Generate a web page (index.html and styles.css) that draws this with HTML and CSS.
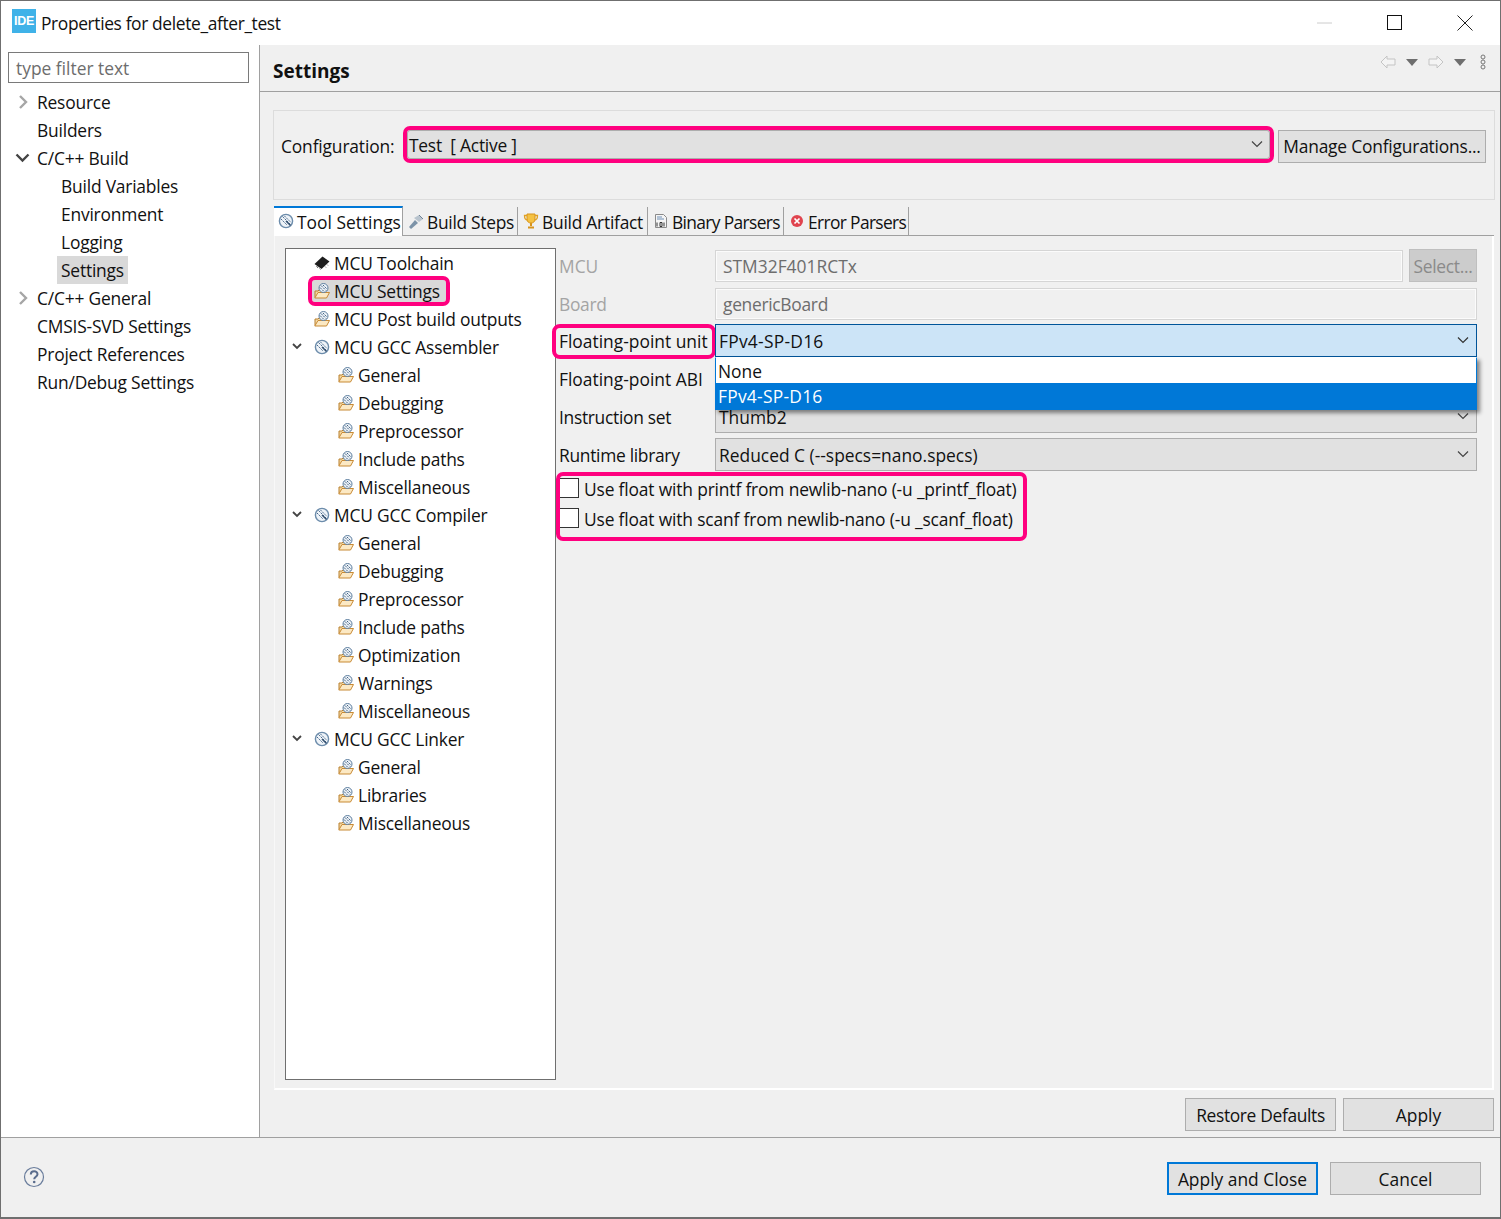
FILE: index.html
```html
<!DOCTYPE html>
<html lang="en">
<head>
<meta charset="utf-8">
<title>Properties for delete_after_test</title>
<link rel="stylesheet" href="styles.css">
</head>
<body>
<svg class="defs" width="0" height="0" aria-hidden="true">
  <symbol id="gear" viewBox="0 0 16 16">
    <circle cx="8" cy="8" r="6.6" fill="#eef3f8" stroke="#6c8cab" stroke-width="1.4"/>
    <path d="M4.500 3.500l8 8M6.500 3l6.500 6.500M3 6l6 6" stroke="#4a6a8c" stroke-width="1" fill="none" stroke-dasharray="2 1"/>
    <path d="M8 8l4.500 4.500" stroke="#34506f" stroke-width="1.400"/>
  </symbol>
  <symbol id="folder" viewBox="0 0 16 16">
    <path d="M1 8h3l1-1h6v7.500H1z" fill="#f3d9a4" stroke="#b9802f"/>
    <path d="M.8 15l3.200-5.500h11.500L12.500 15z" fill="#fce9c4" stroke="#c88a35"/>
    <circle cx="9.500" cy="5" r="4.500" fill="#eef3f8" stroke="#5d7e9f"/>
    <path d="M7 2.500l5 5M9 2l3.500 3.500M6 4.500l4.500 4.500" stroke="#3e5f82" stroke-width="1" fill="none" stroke-dasharray="2 1"/>
  </symbol>
  <symbol id="chip" viewBox="0 0 16 16">
    <path d="M.5 9L8.500 1.500 15.500 6.500 7.500 14z" fill="#1d1d1d"/>
    <path d="M2.500 11l1.500 2M5.500 13.500l1 1M11 11.500l1 1M13 9.500l1 1" stroke="#666" fill="none"/>
  </symbol>
  <symbol id="chevdown" viewBox="0 0 10 7"><path d="M1 1l4 4 4-4" fill="none" stroke="#444" stroke-width="1.800"/></symbol>
</svg>

<div class="window">
  <header class="titlebar">
    <span class="logo">IDE</span>
    <span class="title">Properties for delete_after_test</span>
    <div class="winctl">
      <svg class="ctl" width="16" height="16" viewBox="0 0 16 16"><path d="M0 8h15" stroke="#ccc"/></svg>
      <svg class="ctl" width="16" height="16" viewBox="0 0 16 16"><rect x=".5" y=".5" width="14" height="14" fill="none" stroke="#111"/></svg>
      <svg class="ctl" width="16" height="16" viewBox="0 0 16 16"><path d="M.5.500l15 15M15.500.500l-15 15" stroke="#222"/></svg>
    </div>
  </header>

  <div class="main">
    <aside class="sidebar">
      <div class="filter">type filter text</div>
      <ul class="nav">
        <li class="nav-row"><svg class="twist" width="10" height="16" viewBox="0 0 10 16"><path d="M2 2l6 6-6 6" fill="none" stroke="#a6a6a6" stroke-width="2.400"/></svg><span>Resource</span></li>
        <li class="nav-row"><span>Builders</span></li>
        <li class="nav-row"><svg class="twist twist-open" width="15" height="10" viewBox="0 0 15 10"><path d="M1.500 1.500l6 6 6-6" fill="none" stroke="#444" stroke-width="2.400"/></svg><span>C/C++ Build</span></li>
        <li class="nav-row sub"><span>Build Variables</span></li>
        <li class="nav-row sub"><span>Environment</span></li>
        <li class="nav-row sub"><span>Logging</span></li>
        <li class="nav-row sub"><span class="selected">Settings</span></li>
        <li class="nav-row"><svg class="twist" width="10" height="16" viewBox="0 0 10 16"><path d="M2 2l6 6-6 6" fill="none" stroke="#a6a6a6" stroke-width="2.400"/></svg><span>C/C++ General</span></li>
        <li class="nav-row"><span>CMSIS-SVD Settings</span></li>
        <li class="nav-row"><span>Project References</span></li>
        <li class="nav-row"><span>Run/Debug Settings</span></li>
      </ul>
    </aside>

    <section class="content">
      <div class="content-head">
        <h1>Settings</h1>
        <div class="navbtns">
          <svg width="16" height="14" viewBox="0 0 16 14"><path d="M1 7l6-6v3h8v6H7v3z" fill="#f4f4f4" stroke="#c4c4c4"/></svg>
          <svg width="12" height="7" viewBox="0 0 12 7"><path d="M0 0h12L6 7z" fill="#6e6e6e"/></svg>
          <svg width="16" height="14" viewBox="0 0 16 14"><path d="M15 7L9 1v3H1v6h8v3z" fill="#f4f4f4" stroke="#c4c4c4"/></svg>
          <svg width="12" height="7" viewBox="0 0 12 7"><path d="M0 0h12L6 7z" fill="#6e6e6e"/></svg>
          <svg class="dots" width="6" height="16" viewBox="0 0 6 16"><circle cx="3" cy="3" r="2" fill="none" stroke="#777"/><circle cx="3" cy="8" r="2" fill="none" stroke="#777"/><circle cx="3" cy="13" r="2" fill="none" stroke="#777"/></svg>
        </div>
      </div>

      <div class="body">
        <div class="config">
          <label class="config-label">Configuration:</label>
          <div class="combo config-combo mark"><span>Test&nbsp; [ Active ]</span><svg class="arrow" width="12" height="7" viewBox="0 0 12 7"><path d="M1 .5l5 5 5-5" fill="none" stroke="#444" stroke-width="1.200"/></svg></div>
          <button class="btn manage">Manage Configurations...</button>
        </div>

        <div class="tabs">
          <div class="tab active">
            <svg class="ic" width="16" height="16"><use href="#gear"/></svg>Tool Settings
          </div>
          <div class="tab">
            <svg class="ic" width="16" height="16" viewBox="0 0 16 16"><path d="M1 14l6-7 3 3-7 6z" fill="#7c93a8"/><path d="M6 5l5-3 4 4-4 3z" fill="#b9c4ce"/><path d="M11 2l4 4" stroke="#6f8396"/></svg>Build Steps
          </div>
          <div class="tab">
            <svg class="ic" width="16" height="16" viewBox="0 0 16 16"><path d="M4 1h8v5c0 3-2 4-4 4S4 9 4 6z" fill="#f5c242" stroke="#d8941c"/><path d="M4 2.500H1.500C1.500 6 3 7 4.500 7M12 2.500h2.500C14.500 6 13 7 11.500 7" fill="none" stroke="#e0a022" stroke-width="1.300"/><path d="M8 10v3M5 14.500h6" stroke="#d8941c" stroke-width="2"/></svg>Build Artifact
          </div>
          <div class="tab">
            <svg class="ic" width="16" height="16" viewBox="0 0 16 16"><path d="M2.500 1.500h8l3 3v10h-11z" fill="#f5f5f5" stroke="#8a8a8a"/><path d="M4 4h5M4 6h7" stroke="#6f8fb5"/><path d="M4 9.500v4M7 9.500h2v4H7zM11 9.500v4" stroke="#333" fill="none"/></svg>Binary Parsers
          </div>
          <div class="tab">
            <svg class="ic" width="16" height="16" viewBox="0 0 16 16"><circle cx="8" cy="8" r="6" fill="#e0444f"/><path d="M5.500 5.500l5 5M10.500 5.500l-5 5" stroke="#fff" stroke-width="1.700"/></svg>Error Parsers
          </div>
        </div>

        <div class="panel">
          <ul class="tree">
            <li class="t-row t1"><svg class="ic" width="16" height="16"><use href="#chip"/></svg><span>MCU Toolchain</span></li>
            <li class="t-row t1"><span class="tree-sel mark"><svg class="ic" width="16" height="16"><use href="#folder"/></svg><span>MCU Settings</span></span></li>
            <li class="t-row t1"><svg class="ic" width="16" height="16"><use href="#folder"/></svg><span>MCU Post build outputs</span></li>
            <li class="t-row t0"><svg class="tw" width="10" height="7"><use href="#chevdown"/></svg><svg class="ic" width="16" height="16"><use href="#gear"/></svg><span>MCU GCC Assembler</span></li>
            <li class="t-row t2"><svg class="ic" width="16" height="16"><use href="#folder"/></svg><span>General</span></li>
            <li class="t-row t2"><svg class="ic" width="16" height="16"><use href="#folder"/></svg><span>Debugging</span></li>
            <li class="t-row t2"><svg class="ic" width="16" height="16"><use href="#folder"/></svg><span>Preprocessor</span></li>
            <li class="t-row t2"><svg class="ic" width="16" height="16"><use href="#folder"/></svg><span>Include paths</span></li>
            <li class="t-row t2"><svg class="ic" width="16" height="16"><use href="#folder"/></svg><span>Miscellaneous</span></li>
            <li class="t-row t0"><svg class="tw" width="10" height="7"><use href="#chevdown"/></svg><svg class="ic" width="16" height="16"><use href="#gear"/></svg><span>MCU GCC Compiler</span></li>
            <li class="t-row t2"><svg class="ic" width="16" height="16"><use href="#folder"/></svg><span>General</span></li>
            <li class="t-row t2"><svg class="ic" width="16" height="16"><use href="#folder"/></svg><span>Debugging</span></li>
            <li class="t-row t2"><svg class="ic" width="16" height="16"><use href="#folder"/></svg><span>Preprocessor</span></li>
            <li class="t-row t2"><svg class="ic" width="16" height="16"><use href="#folder"/></svg><span>Include paths</span></li>
            <li class="t-row t2"><svg class="ic" width="16" height="16"><use href="#folder"/></svg><span>Optimization</span></li>
            <li class="t-row t2"><svg class="ic" width="16" height="16"><use href="#folder"/></svg><span>Warnings</span></li>
            <li class="t-row t2"><svg class="ic" width="16" height="16"><use href="#folder"/></svg><span>Miscellaneous</span></li>
            <li class="t-row t0"><svg class="tw" width="10" height="7"><use href="#chevdown"/></svg><svg class="ic" width="16" height="16"><use href="#gear"/></svg><span>MCU GCC Linker</span></li>
            <li class="t-row t2"><svg class="ic" width="16" height="16"><use href="#folder"/></svg><span>General</span></li>
            <li class="t-row t2"><svg class="ic" width="16" height="16"><use href="#folder"/></svg><span>Libraries</span></li>
            <li class="t-row t2"><svg class="ic" width="16" height="16"><use href="#folder"/></svg><span>Miscellaneous</span></li>
          </ul>

          <div class="form">
            <div class="f-row">
              <span class="f-label disabled">MCU</span>
              <div class="field">STM32F401RCTx</div>
              <button class="btn select-btn">Select...</button>
            </div>
            <div class="f-row">
              <span class="f-label disabled tight">Board</span>
              <div class="field tight">genericBoard</div>
            </div>
            <div class="f-row fpu-row">
              <span class="f-label mark fpu-label">Floating-point unit</span>
              <div class="combo focus"><span class="loose">FPv4-SP-D16</span><svg class="arrow" width="12" height="7" viewBox="0 0 12 7"><path d="M1 .5l5 5 5-5" fill="none" stroke="#333" stroke-width="1.200"/></svg></div>
              <ul class="dropdown">
                <li>None</li>
                <li class="dd-sel loose">FPv4-SP-D16</li>
              </ul>
            </div>
            <div class="f-row">
              <span class="f-label">Floating-point ABI</span>
              <div class="combo"></div>
            </div>
            <div class="f-row">
              <span class="f-label tight">Instruction set</span>
              <div class="combo"><span>Thumb2</span><svg class="arrow" width="12" height="7" viewBox="0 0 12 7"><path d="M1 .5l5 5 5-5" fill="none" stroke="#444" stroke-width="1.200"/></svg></div>
            </div>
            <div class="f-row">
              <span class="f-label tight">Runtime library</span>
              <div class="combo"><span>Reduced C (--specs=nano.specs)</span><svg class="arrow" width="12" height="7" viewBox="0 0 12 7"><path d="M1 .5l5 5 5-5" fill="none" stroke="#444" stroke-width="1.200"/></svg></div>
            </div>
            <div class="checks mark">
              <div class="check"><span class="box"></span><span class="check-text">Use float with printf from newlib-nano (-u _printf_float)</span></div>
              <div class="check"><span class="box"></span><span class="check-text">Use float with scanf from newlib-nano (-u _scanf_float)</span></div>
            </div>
          </div>
        </div>

        <div class="actions">
          <button class="btn restore">Restore Defaults</button>
          <button class="btn apply">Apply</button>
        </div>
      </div>
    </section>
  </div>

  <footer class="footer">
    <svg class="help" width="22" height="22" viewBox="0 0 22 22"><circle cx="11" cy="11" r="9.500" fill="none" stroke="#6a7d9c" stroke-width="1.200"/><path d="M7.800 8.500c0-4.300 6.700-4.300 6.700-.3 0 2.500-3.300 2.500-3.300 5" fill="none" stroke="#5a6c8c" stroke-width="2"/><circle cx="11.200" cy="16" r="1.300" fill="#5a6c8c"/></svg>
    <div class="footer-btns">
      <button class="btn wide primary">Apply and Close</button>
      <button class="btn wide">Cancel</button>
    </div>
  </footer>
</div>
</body>
</html>
```
FILE: styles.css
```css
* { box-sizing: border-box; }
html, body { margin: 0; padding: 0; }
body {
  width: 1501px;
  height: 1219px;
  overflow: hidden;
  font-family: "Open Sans", "Noto Sans", sans-serif;
  font-size: 17.4px;
  color: #111;
  background: #f0f0f0;
}
.defs { position: absolute; }
ul { list-style: none; margin: 0; padding: 0; }
.tight { letter-spacing: -0.3px; }
.loose { letter-spacing: 0.25px; }

.window {
  width: 1501px;
  height: 1219px;
  border: 1px solid #6f6f6f;
  border-bottom-width: 2px;
  display: flex;
  flex-direction: column;
}

.titlebar {
  height: 44px;
  background: #fff;
  display: flex;
  align-items: center;
  padding: 0 0 1px 11px;
  flex: none;
}
.logo {
  width: 24px;
  height: 24px;
  margin-top: -4px;
  background: #3fb2e8;
  color: #fff;
  font: bold 12.500px/24px "Liberation Sans", sans-serif;
  letter-spacing: -0.300px;
  text-align: center;
}
.title { margin-left: 5px; white-space: nowrap; margin-top: 1px; letter-spacing: -0.37px; }
.winctl {
  margin-left: auto;
  display: flex;
  gap: 54px;
  padding-right: 27px;
}

.main { flex: 1; display: flex; min-height: 0; }

.sidebar {
  width: 259px;
  flex: none;
  background: #fff;
  border-right: 1px solid #a0a0a0;
  padding: 7px 10px 0 7px;
}
.filter {
  height: 31px;
  width: 241px;
  border: 1px solid #7a7a7a;
  padding: 0 7px;
  line-height: 30px;
  color: #6d6d6d;
}
.nav { margin-top: 5px; margin-left: -7px; }
.nav-row {
  height: 28px;
  display: flex;
  align-items: center;
  position: relative;
  padding-left: 36px;
  white-space: nowrap;
  letter-spacing: -0.2px;
}
.nav-row.sub { padding-left: 60px; }
.twist { position: absolute; left: 17px; top: 6px; }
.twist-open { left: 14px; top: 9px; }
.selected { background: #d9d9d9; padding: 0 4px; margin-left: -4px; line-height: 28px; }

.content { flex: 1; display: flex; flex-direction: column; min-width: 0; }
.content-head {
  height: 47px;
  flex: none;
  border-bottom: 1px solid #a0a0a0;
  display: flex;
  align-items: center;
  padding: 0 12px 0 13px;
}
.content-head h1 { font-size: 19px; font-weight: 700; margin: 6px 0 0; }
.navbtns {
  margin-left: auto;
  margin-top: -12px;
  display: flex;
  align-items: center;
  gap: 10px;
  padding-right: 2px;
}
.navbtns .dots { margin-left: 4px; }

.body { flex: 1; display: flex; flex-direction: column; padding: 18px 6px 0 13px; min-height: 0; }

.config {
  height: 90px;
  margin-right: -1px;
  border: 1px solid #dcdcdc;
  flex: none;
  display: flex;
  align-items: flex-start;
  padding: 19px 8px 0 7px;
}
.config-label { line-height: 33px; white-space: nowrap; width: 126px; flex: none; letter-spacing: -0.15px; }
.combo.config-combo {
  flex: 1;
  height: 29px;
  margin-right: 8px;
  padding: 0 6px 0 1px;
  letter-spacing: -0.25px;
}
.config-combo span { margin-top: 1px; }
.manage { height: 33px; width: 208px; padding: 0 0 2px; letter-spacing: -0.2px; }

.tabs {
  display: flex;
  height: 30px;
  margin: 6px 0 0 1px;
  border-bottom: 1px solid #a0a0a0;
  flex: none;
}
.tab {
  height: 28px;
  display: flex;
  align-items: center;
  padding: 2px 0 0 5px;
  border-right: 1px solid #a0a0a0;
  white-space: nowrap;
  margin-top: 1px;
  flex: none;
}
.tab .ic { margin-right: 3px; margin-top: -2px; }
.tab:nth-child(1) { width: 129px; }
.tab:nth-child(2) { width: 115px; letter-spacing: -0.3px; }
.tab:nth-child(3) { width: 130px; letter-spacing: -0.25px; }
.tab:nth-child(4) { width: 136px; letter-spacing: -0.65px; }
.tab:nth-child(5) { width: 125px; letter-spacing: -0.65px; }
.tab.active {
  border-top: 2px solid #0078d7;
  background: #fff;
  height: 30px;
  margin-top: 0;
  padding: 0 0 0 4px;
  position: relative;
}

.panel {
  height: 854px;
  flex: none;
  margin-left: 1px;
  background: #f0f0f0;
  border-right: 2px solid #fff;
  border-bottom: 2px solid #fff;
  border-left: 1px solid #f8f8f8;
  padding: 12px 15px 8px 10px;
  display: flex;
}

.tree {
  width: 271px;
  height: 832px;
  flex: none;
  background: #fff;
  border: 1px solid #6f6f6f;
  letter-spacing: -0.2px;
}
.t-row {
  height: 28px;
  display: flex;
  align-items: center;
  position: relative;
  white-space: nowrap;
}
.t-row .ic { flex: none; margin-right: 4px; }
.t1, .t0 { padding-left: 28px; }
.t2 { padding-left: 52px; }
.tw { position: absolute; left: 6px; top: 10px; }
.tree-sel {
  display: flex;
  align-items: center;
  height: 22px;
  background: #d9d9d9;
  margin-left: -2px;
  padding: 0 6px 0 2px;
}

.form { flex: 1; min-width: 0; padding: 1px 0 0 3px; display: flex; flex-direction: column; }
.f-row {
  display: grid;
  grid-template-columns: 156px 1fr auto;
  height: 33px;
  margin-bottom: 5px;
  align-items: center;
  position: relative;
}
.fpu-row { margin-top: -1px; }
.f-label { white-space: nowrap; line-height: 28px; }
.disabled { color: #a4a4a4; }
.field {
  grid-column: 2 / -1;
  height: 32px;
  border: 1px solid #d5d5d5;
  box-shadow: inset 0 0 0 1px #fbfbfb;
  background: #f0f0f0;
  padding: 0 7px;
  line-height: 30px;
  color: #6d6d6d;
}
.f-row:first-child .field { grid-column: 2; }
.btn.select-btn {
  margin-left: 6px;
  width: 68px;
  height: 33px;
  padding: 0;
  background: #cccccc;
  color: #8a8a8a;
  border-color: #bfbfbf;
  letter-spacing: -0.3px;
}
.combo {
  grid-column: 2 / -1;
  height: 33px;
  border: 1px solid #adadad;
  background: #e1e1e1;
  padding: 0 7px 0 3px;
  display: flex;
  align-items: center;
  justify-content: space-between;
  line-height: 28px;
  white-space: nowrap;
}
.combo.focus { background: #cce4f7; border: 1px solid #005499; }
.arrow { flex: none; }

.mark { outline: 4px solid #ff007f; border-radius: 3px; }
.f-label.fpu-label {
  width: 154px;
  margin: 2px 0 0 -2px;
  padding-left: 2px;
  height: 25px;
  line-height: 25px;
  outline-offset: 1px;
}

.dropdown {
  position: absolute;
  left: 156px;
  right: 0;
  top: 33px;
  height: 53px;
  background: #fff;
  border: 1px solid #0078d7;
  border-top: 1px solid #fff;
  box-shadow: 3px 3px 4px rgba(0, 0, 0, 0.45);
  z-index: 3;
}
.dropdown li { height: 25px; line-height: 26px; padding-left: 2px; }
.dropdown .dd-sel { background: #0078d7; color: #fff; height: 26px; margin: 0 -1px; padding-left: 3px; }

.checks {
  margin-left: 1px;
  width: 463px;
  height: 61px;
  padding-top: 2px;
  letter-spacing: -0.16px;
}
.check { display: flex; align-items: center; height: 20px; margin-left: -1px; white-space: nowrap; }
.check + .check { margin-top: 10px; }
.check-text { padding-top: 2px; }
.box {
  width: 20px;
  height: 20px;
  flex: none;
  border: 1px solid #333;
  background: #fff;
  margin-right: 5px;
}

.btn {
  font: inherit;
  color: #111;
  background: #e1e1e1;
  border: 1px solid #adadad;
  white-space: nowrap;
}

.actions {
  display: flex;
  justify-content: flex-end;
  gap: 7px;
  margin-top: 8px;
}
.actions .btn { height: 33px; padding: 0; }
.restore { width: 151px; letter-spacing: -0.35px; }
.apply { width: 151px; }

.footer {
  height: 80px;
  flex: none;
  background: #f0f0f0;
  border-top: 1px solid #a0a0a0;
  display: flex;
  align-items: center;
  padding: 0 19px 2px 22px;
  justify-content: space-between;
}
.footer-btns { display: flex; gap: 12px; margin-top: 4px; }
.wide { width: 151px; height: 33px; padding: 0; }
.primary { border: 2px solid #0078d7; }
.help { flex: none; }
```
